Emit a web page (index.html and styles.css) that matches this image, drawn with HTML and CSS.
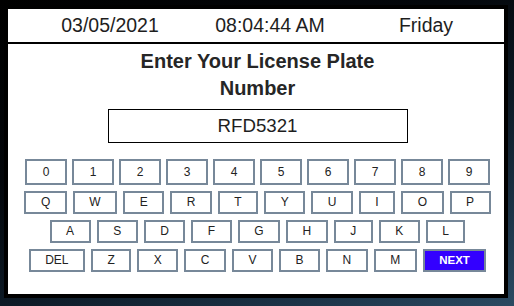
FILE: index.html
```html
<!DOCTYPE html>
<html>
<head>
<meta charset="utf-8">
<link rel="stylesheet" href="styles.css">
</head>
<body>
<div class="screen">
  <div class="header">
    <div>03/05/2021</div>
    <div>08:04:44 AM</div>
    <div>Friday</div>
  </div>
  <div class="main">
    <div class="title">Enter Your License Plate Number</div>
    <div class="plate">RFD5321</div>
    <div class="keyboard">
      <div class="row row-digits">
        <button class="key">0</button><button class="key">1</button><button class="key">2</button><button class="key">3</button><button class="key">4</button><button class="key">5</button><button class="key">6</button><button class="key">7</button><button class="key">8</button><button class="key">9</button>
      </div>
      <div class="row">
        <button class="key">Q</button><button class="key">W</button><button class="key">E</button><button class="key">R</button><button class="key">T</button><button class="key">Y</button><button class="key">U</button><button class="key">I</button><button class="key">O</button><button class="key">P</button>
      </div>
      <div class="row">
        <button class="key">A</button><button class="key">S</button><button class="key">D</button><button class="key">F</button><button class="key">G</button><button class="key">H</button><button class="key">J</button><button class="key">K</button><button class="key">L</button>
      </div>
      <div class="row">
        <button class="key">DEL</button><button class="key">Z</button><button class="key">X</button><button class="key">C</button><button class="key">V</button><button class="key">B</button><button class="key">N</button><button class="key">M</button><button class="key key-next">NEXT</button>
      </div>
    </div>
  </div>
</div>
</body>
</html>
```
FILE: styles.css
```css
html, body {
  margin: 0;
  padding: 0;
}
body {
  width: 514px;
  height: 306px;
  overflow: hidden;
  font-family: "Liberation Sans", Arial, sans-serif;
  background: linear-gradient(158deg, #000000 0%, #03060a 35%, #0d1a26 60%, #1c3347 82%, #2b4a62 100%);
}
.screen {
  margin: 5px 0 0 4px;
  width: 496px;
  height: 285px;
  border: 4px solid #000;
  background: #fff;
}
.header {
  height: 33px;
  border-bottom: 2px solid #000;
  display: grid;
  grid-template-columns: 160px 160px 152px;
  padding-left: 22px;
  font-size: 19.5px;
  line-height: 33px;
  color: #1e1e1e;
  text-align: center;
}
.main {
  padding-left: 3px;
  display: flex;
  flex-direction: column;
  align-items: center;
}
.title {
  margin-top: 3.5px;
  width: 260px;
  font-size: 20px;
  font-weight: bold;
  line-height: 27px;
  color: #262626;
  text-align: center;
}
.plate {
  margin-top: 7.5px;
  width: 300px;
  height: 34px;
  box-sizing: border-box;
  border: 1px solid #000;
  font-size: 18.7px;
  line-height: 32px;
  color: #1e1e1e;
  text-align: center;
}
.keyboard {
  margin-top: 16px;
  display: flex;
  flex-direction: column;
  align-items: center;
  gap: 6px;
}
.row {
  display: flex;
  gap: 6px;
}
.row-digits {
  gap: 5px;
}
.key {
  appearance: none;
  margin: 0;
  height: 23px;
  box-sizing: border-box;
  border: 2px solid #778899;
  border-radius: 0;
  padding: 0 14.5px;
  background: #fff;
  font-family: "Liberation Sans", Arial, sans-serif;
  font-size: 12px;
  line-height: 19px;
  color: #222;
  text-align: center;
}
.row-digits .key {
  width: 42px;
  height: 26px;
  padding: 0;
  line-height: 22px;
}
.key-next {
  background: #3300ff;
  color: #fff;
  font-weight: bold;
  font-size: 11.5px;
}
```
